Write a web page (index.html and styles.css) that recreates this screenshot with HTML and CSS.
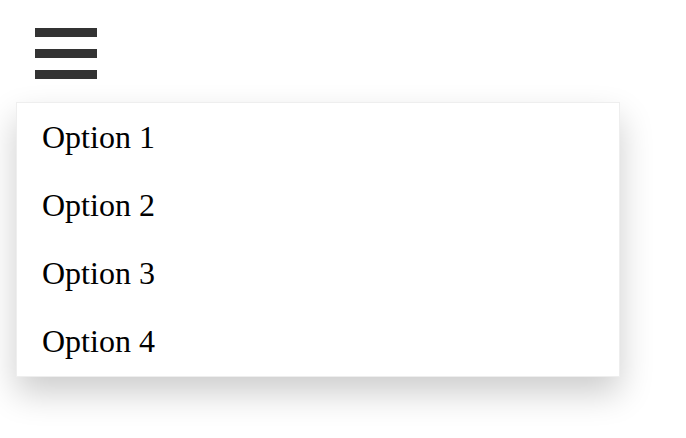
FILE: index.html
```html
<!DOCTYPE html>
<html>
<head>
<meta charset="utf-8">
<link rel="stylesheet" href="styles.css">
</head>
<body>
<div class="page">
  <div class="burger">
    <span class="bar"></span>
    <span class="bar"></span>
    <span class="bar"></span>
  </div>
  <div class="menu">
    <a class="item">Option 1</a>
    <a class="item">Option 2</a>
    <a class="item">Option 3</a>
    <a class="item">Option 4</a>
  </div>
</div>
</body>
</html>
```
FILE: styles.css
```css
html, body {
  margin: 0;
  padding: 0;
  background: #fff;
  min-height: 100%;
}
.page {
  font-family: "Liberation Serif", "Times New Roman", serif;
  padding: 28px 0 70px 16px;
  min-height: 438px;
  box-sizing: border-box;
}
.burger {
  display: flex;
  flex-direction: column;
  gap: 12px;
  margin-left: 19px;
  width: 62px;
}
.bar {
  display: block;
  height: 9px;
  background: #333;
}
.menu {
  margin-top: 23px;
  width: 602px;
  border: 1px solid #eee;
  background: #fff;
  box-shadow: 0 16px 32px 0 rgba(0, 0, 0, 0.2);
  display: flex;
  flex-direction: column;
  padding-bottom: 1px;
}
.item {
  display: block;
  color: #000;
  font-size: 32px;
  line-height: 36px;
  padding: 16px 25px;
}
```
